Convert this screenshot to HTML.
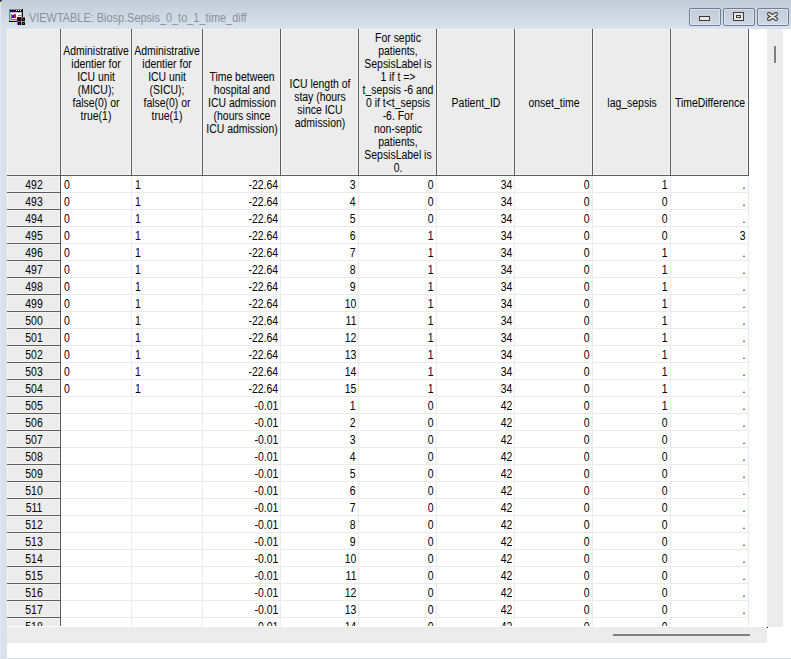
<!DOCTYPE html><html><head><meta charset="utf-8"><style>
html,body{margin:0;padding:0;}
body{width:791px;height:659px;overflow:hidden;position:relative;background:#fff;font-family:"Liberation Sans", sans-serif;}
div{position:absolute;}
.t{white-space:nowrap;font-size:12px;line-height:16px;color:#000;}
.hl{font-size:12px;line-height:13px;white-space:nowrap;color:#000;}
</style></head><body><div style="left:0px;top:0px;width:791px;height:29px;background:linear-gradient(#c2cdd9,#d9e2ed);"></div><div style="left:0px;top:29px;width:7px;height:630px;background:#d9e1ed;"></div><div style="left:0px;top:0px;width:1px;height:659px;background:#e3e6ec;"></div><div style="left:0px;top:658px;width:791px;height:1px;background:#d9e1ed;"></div><div style="left:0;top:0;width:3px;height:3px;background:linear-gradient(135deg,#444 0,#444 50%,transparent 50%)"></div><svg width="16" height="16" viewBox="0 0 16 16" shape-rendering="crispEdges" style="position:absolute;left:9px;top:9px">
<rect x="0" y="0" width="14" height="13" fill="#808080"/>
<rect x="13" y="0" width="1" height="13" fill="#000"/>
<rect x="0" y="12" width="14" height="1" fill="#000"/>
<rect x="1" y="1" width="12" height="2" fill="#000"/>
<rect x="1" y="1" width="5" height="2" fill="#000080"/>
<rect x="7" y="1" width="1" height="1" fill="#fff"/><rect x="9" y="1" width="1" height="1" fill="#fff"/><rect x="11" y="1" width="1" height="1" fill="#fff"/>
<rect x="1" y="3" width="12" height="9" fill="#c0c0c0"/>
<rect x="2" y="4" width="10" height="7" fill="#fff"/>
<rect x="2" y="5" width="1" height="6" fill="#808080"/>
<rect x="2" y="10" width="8" height="1" fill="#808080"/>
<rect x="3" y="6" width="2" height="3" fill="#0000ff"/>
<rect x="5" y="5" width="2" height="4" fill="#ff0000"/>
<rect x="9" y="6" width="3" height="1" fill="#808080"/>
<rect x="8" y="8" width="8" height="8" fill="#000"/>
<rect x="8" y="8" width="4" height="1" fill="#0000ff"/><rect x="8" y="8" width="1" height="4" fill="#0000ff"/>
<rect x="12" y="8" width="4" height="1" fill="#ff2000"/><rect x="12" y="8" width="1" height="4" fill="#ff2000"/>
<rect x="8" y="12" width="4" height="1" fill="#ff00ff"/><rect x="8" y="12" width="1" height="4" fill="#ff00ff"/>
<rect x="12" y="12" width="4" height="1" fill="#00ff00"/><rect x="12" y="12" width="1" height="4" fill="#00ff00"/>
<rect x="10" y="10" width="1" height="1" fill="#000080"/><rect x="14" y="10" width="1" height="1" fill="#800000"/>
<rect x="10" y="14" width="1" height="1" fill="#800080"/><rect x="14" y="14" width="1" height="1" fill="#008000"/>
</svg><div class="t" style="left:29px;top:10px;font-size:13px;line-height:16px;color:#8a909a;transform:scaleX(0.84);transform-origin:0 0">VIEWTABLE: Biosp.Sepsis_0_to_1_time_diff</div><div style="left:689px;top:8px;width:30px;height:16px;border:1px solid #737a92;border-radius:2px;background:linear-gradient(#c2ccd9,#cfd8e4);box-shadow:inset 0 0 0 1px #dde4ee"></div><svg style="position:absolute;left:699px;top:16px" width="11" height="5" shape-rendering="crispEdges"><rect x="0" y="0" width="11" height="5" rx="1" fill="#3c3c3c"/><rect x="1" y="1" width="9" height="3" fill="#ebe8e0"/></svg><div style="left:723px;top:8px;width:30px;height:16px;border:1px solid #737a92;border-radius:2px;background:linear-gradient(#c2ccd9,#cfd8e4);box-shadow:inset 0 0 0 1px #dde4ee"></div><svg style="position:absolute;left:733px;top:12px" width="11" height="9" shape-rendering="crispEdges"><rect x="0" y="0" width="11" height="9" rx="1" fill="#3c3c3c"/><rect x="1" y="1" width="9" height="7" fill="#ebe8e0"/><rect x="3" y="3" width="5" height="3" fill="#3c3c3c"/><rect x="4" y="4" width="3" height="1" fill="#ebe8e0"/></svg><div style="left:757px;top:8px;width:30px;height:16px;border:1px solid #737a92;border-radius:2px;background:linear-gradient(#c2ccd9,#cfd8e4);box-shadow:inset 0 0 0 1px #dde4ee"></div><svg style="position:absolute;left:766px;top:11px" width="13" height="11" viewBox="0 0 13 11"><path d="M3 3 L10 8 M10 3 L3 8" stroke="#3c3c3c" stroke-width="4" stroke-linecap="round"/><path d="M3 3 L10 8 M10 3 L3 8" stroke="#ebe8e0" stroke-width="2" stroke-linecap="round"/></svg><div style="left:7px;top:29px;width:742px;height:147px;background:#ececec;"></div><div style="left:7px;top:29px;width:741px;height:1px;background:#f4f4f4;"></div><div style="left:7px;top:29px;width:1px;height:146px;background:#f4f4f4;"></div><div style="left:7px;top:174px;width:741px;height:1px;background:#f4f4f4;"></div><div style="left:7px;top:175px;width:742px;height:1px;background:#5c5c5c;"></div><div style="left:59px;top:30px;width:1px;height:144px;background:#f4f4f4;"></div><div style="left:61px;top:30px;width:1px;height:144px;background:#f4f4f4;"></div><div style="left:60px;top:29px;width:1px;height:147px;background:#5c5c5c;"></div><div style="left:130px;top:30px;width:1px;height:144px;background:#f4f4f4;"></div><div style="left:132px;top:30px;width:1px;height:144px;background:#f4f4f4;"></div><div style="left:131px;top:29px;width:1px;height:147px;background:#5c5c5c;"></div><div style="left:201px;top:30px;width:1px;height:144px;background:#f4f4f4;"></div><div style="left:203px;top:30px;width:1px;height:144px;background:#f4f4f4;"></div><div style="left:202px;top:29px;width:1px;height:147px;background:#5c5c5c;"></div><div style="left:279px;top:30px;width:1px;height:144px;background:#f4f4f4;"></div><div style="left:281px;top:30px;width:1px;height:144px;background:#f4f4f4;"></div><div style="left:280px;top:29px;width:1px;height:147px;background:#5c5c5c;"></div><div style="left:357px;top:30px;width:1px;height:144px;background:#f4f4f4;"></div><div style="left:359px;top:30px;width:1px;height:144px;background:#f4f4f4;"></div><div style="left:358px;top:29px;width:1px;height:147px;background:#5c5c5c;"></div><div style="left:435px;top:30px;width:1px;height:144px;background:#f4f4f4;"></div><div style="left:437px;top:30px;width:1px;height:144px;background:#f4f4f4;"></div><div style="left:436px;top:29px;width:1px;height:147px;background:#5c5c5c;"></div><div style="left:513px;top:30px;width:1px;height:144px;background:#f4f4f4;"></div><div style="left:515px;top:30px;width:1px;height:144px;background:#f4f4f4;"></div><div style="left:514px;top:29px;width:1px;height:147px;background:#5c5c5c;"></div><div style="left:591px;top:30px;width:1px;height:144px;background:#f4f4f4;"></div><div style="left:593px;top:30px;width:1px;height:144px;background:#f4f4f4;"></div><div style="left:592px;top:29px;width:1px;height:147px;background:#5c5c5c;"></div><div style="left:669px;top:30px;width:1px;height:144px;background:#f4f4f4;"></div><div style="left:671px;top:30px;width:1px;height:144px;background:#f4f4f4;"></div><div style="left:670px;top:29px;width:1px;height:147px;background:#5c5c5c;"></div><div style="left:747px;top:30px;width:1px;height:144px;background:#f4f4f4;"></div><div style="left:748px;top:29px;width:1px;height:147px;background:#5c5c5c;"></div><div style="left:61px;top:176px;width:688px;height:450px;background:#fff;"></div><div style="left:7px;top:176px;width:53px;height:450px;background:#ececec;"></div><div style="left:60px;top:176px;width:1px;height:450px;background:#5c5c5c;"></div><div style="left:7px;top:176px;width:1px;height:450px;background:#f4f4f4;"></div><div style="left:59px;top:176px;width:1px;height:450px;background:#f4f4f4;"></div><div style="left:7px;top:176px;width:52px;height:1px;background:#f4f4f4;"></div><div style="left:7px;top:192px;width:53px;height:1px;background:#5c5c5c;"></div><div style="left:7px;top:191px;width:52px;height:1px;background:#f4f4f4;"></div><div style="left:7px;top:193px;width:52px;height:1px;background:#f4f4f4;"></div><div style="left:62px;top:192px;width:687px;height:1px;background:#ebebeb;"></div><div style="left:7px;top:209px;width:53px;height:1px;background:#5c5c5c;"></div><div style="left:7px;top:208px;width:52px;height:1px;background:#f4f4f4;"></div><div style="left:7px;top:210px;width:52px;height:1px;background:#f4f4f4;"></div><div style="left:62px;top:209px;width:687px;height:1px;background:#ebebeb;"></div><div style="left:7px;top:226px;width:53px;height:1px;background:#5c5c5c;"></div><div style="left:7px;top:225px;width:52px;height:1px;background:#f4f4f4;"></div><div style="left:7px;top:227px;width:52px;height:1px;background:#f4f4f4;"></div><div style="left:62px;top:226px;width:687px;height:1px;background:#ebebeb;"></div><div style="left:7px;top:243px;width:53px;height:1px;background:#5c5c5c;"></div><div style="left:7px;top:242px;width:52px;height:1px;background:#f4f4f4;"></div><div style="left:7px;top:244px;width:52px;height:1px;background:#f4f4f4;"></div><div style="left:62px;top:243px;width:687px;height:1px;background:#ebebeb;"></div><div style="left:7px;top:260px;width:53px;height:1px;background:#5c5c5c;"></div><div style="left:7px;top:259px;width:52px;height:1px;background:#f4f4f4;"></div><div style="left:7px;top:261px;width:52px;height:1px;background:#f4f4f4;"></div><div style="left:62px;top:260px;width:687px;height:1px;background:#ebebeb;"></div><div style="left:7px;top:277px;width:53px;height:1px;background:#5c5c5c;"></div><div style="left:7px;top:276px;width:52px;height:1px;background:#f4f4f4;"></div><div style="left:7px;top:278px;width:52px;height:1px;background:#f4f4f4;"></div><div style="left:62px;top:277px;width:687px;height:1px;background:#ebebeb;"></div><div style="left:7px;top:294px;width:53px;height:1px;background:#5c5c5c;"></div><div style="left:7px;top:293px;width:52px;height:1px;background:#f4f4f4;"></div><div style="left:7px;top:295px;width:52px;height:1px;background:#f4f4f4;"></div><div style="left:62px;top:294px;width:687px;height:1px;background:#ebebeb;"></div><div style="left:7px;top:311px;width:53px;height:1px;background:#5c5c5c;"></div><div style="left:7px;top:310px;width:52px;height:1px;background:#f4f4f4;"></div><div style="left:7px;top:312px;width:52px;height:1px;background:#f4f4f4;"></div><div style="left:62px;top:311px;width:687px;height:1px;background:#ebebeb;"></div><div style="left:7px;top:328px;width:53px;height:1px;background:#5c5c5c;"></div><div style="left:7px;top:327px;width:52px;height:1px;background:#f4f4f4;"></div><div style="left:7px;top:329px;width:52px;height:1px;background:#f4f4f4;"></div><div style="left:62px;top:328px;width:687px;height:1px;background:#ebebeb;"></div><div style="left:7px;top:345px;width:53px;height:1px;background:#5c5c5c;"></div><div style="left:7px;top:344px;width:52px;height:1px;background:#f4f4f4;"></div><div style="left:7px;top:346px;width:52px;height:1px;background:#f4f4f4;"></div><div style="left:62px;top:345px;width:687px;height:1px;background:#ebebeb;"></div><div style="left:7px;top:362px;width:53px;height:1px;background:#5c5c5c;"></div><div style="left:7px;top:361px;width:52px;height:1px;background:#f4f4f4;"></div><div style="left:7px;top:363px;width:52px;height:1px;background:#f4f4f4;"></div><div style="left:62px;top:362px;width:687px;height:1px;background:#ebebeb;"></div><div style="left:7px;top:379px;width:53px;height:1px;background:#5c5c5c;"></div><div style="left:7px;top:378px;width:52px;height:1px;background:#f4f4f4;"></div><div style="left:7px;top:380px;width:52px;height:1px;background:#f4f4f4;"></div><div style="left:62px;top:379px;width:687px;height:1px;background:#ebebeb;"></div><div style="left:7px;top:396px;width:53px;height:1px;background:#5c5c5c;"></div><div style="left:7px;top:395px;width:52px;height:1px;background:#f4f4f4;"></div><div style="left:7px;top:397px;width:52px;height:1px;background:#f4f4f4;"></div><div style="left:62px;top:396px;width:687px;height:1px;background:#ebebeb;"></div><div style="left:7px;top:413px;width:53px;height:1px;background:#5c5c5c;"></div><div style="left:7px;top:412px;width:52px;height:1px;background:#f4f4f4;"></div><div style="left:7px;top:414px;width:52px;height:1px;background:#f4f4f4;"></div><div style="left:62px;top:413px;width:687px;height:1px;background:#ebebeb;"></div><div style="left:7px;top:430px;width:53px;height:1px;background:#5c5c5c;"></div><div style="left:7px;top:429px;width:52px;height:1px;background:#f4f4f4;"></div><div style="left:7px;top:431px;width:52px;height:1px;background:#f4f4f4;"></div><div style="left:62px;top:430px;width:687px;height:1px;background:#ebebeb;"></div><div style="left:7px;top:447px;width:53px;height:1px;background:#5c5c5c;"></div><div style="left:7px;top:446px;width:52px;height:1px;background:#f4f4f4;"></div><div style="left:7px;top:448px;width:52px;height:1px;background:#f4f4f4;"></div><div style="left:62px;top:447px;width:687px;height:1px;background:#ebebeb;"></div><div style="left:7px;top:464px;width:53px;height:1px;background:#5c5c5c;"></div><div style="left:7px;top:463px;width:52px;height:1px;background:#f4f4f4;"></div><div style="left:7px;top:465px;width:52px;height:1px;background:#f4f4f4;"></div><div style="left:62px;top:464px;width:687px;height:1px;background:#ebebeb;"></div><div style="left:7px;top:481px;width:53px;height:1px;background:#5c5c5c;"></div><div style="left:7px;top:480px;width:52px;height:1px;background:#f4f4f4;"></div><div style="left:7px;top:482px;width:52px;height:1px;background:#f4f4f4;"></div><div style="left:62px;top:481px;width:687px;height:1px;background:#ebebeb;"></div><div style="left:7px;top:498px;width:53px;height:1px;background:#5c5c5c;"></div><div style="left:7px;top:497px;width:52px;height:1px;background:#f4f4f4;"></div><div style="left:7px;top:499px;width:52px;height:1px;background:#f4f4f4;"></div><div style="left:62px;top:498px;width:687px;height:1px;background:#ebebeb;"></div><div style="left:7px;top:515px;width:53px;height:1px;background:#5c5c5c;"></div><div style="left:7px;top:514px;width:52px;height:1px;background:#f4f4f4;"></div><div style="left:7px;top:516px;width:52px;height:1px;background:#f4f4f4;"></div><div style="left:62px;top:515px;width:687px;height:1px;background:#ebebeb;"></div><div style="left:7px;top:532px;width:53px;height:1px;background:#5c5c5c;"></div><div style="left:7px;top:531px;width:52px;height:1px;background:#f4f4f4;"></div><div style="left:7px;top:533px;width:52px;height:1px;background:#f4f4f4;"></div><div style="left:62px;top:532px;width:687px;height:1px;background:#ebebeb;"></div><div style="left:7px;top:549px;width:53px;height:1px;background:#5c5c5c;"></div><div style="left:7px;top:548px;width:52px;height:1px;background:#f4f4f4;"></div><div style="left:7px;top:550px;width:52px;height:1px;background:#f4f4f4;"></div><div style="left:62px;top:549px;width:687px;height:1px;background:#ebebeb;"></div><div style="left:7px;top:566px;width:53px;height:1px;background:#5c5c5c;"></div><div style="left:7px;top:565px;width:52px;height:1px;background:#f4f4f4;"></div><div style="left:7px;top:567px;width:52px;height:1px;background:#f4f4f4;"></div><div style="left:62px;top:566px;width:687px;height:1px;background:#ebebeb;"></div><div style="left:7px;top:583px;width:53px;height:1px;background:#5c5c5c;"></div><div style="left:7px;top:582px;width:52px;height:1px;background:#f4f4f4;"></div><div style="left:7px;top:584px;width:52px;height:1px;background:#f4f4f4;"></div><div style="left:62px;top:583px;width:687px;height:1px;background:#ebebeb;"></div><div style="left:7px;top:600px;width:53px;height:1px;background:#5c5c5c;"></div><div style="left:7px;top:599px;width:52px;height:1px;background:#f4f4f4;"></div><div style="left:7px;top:601px;width:52px;height:1px;background:#f4f4f4;"></div><div style="left:62px;top:600px;width:687px;height:1px;background:#ebebeb;"></div><div style="left:7px;top:617px;width:53px;height:1px;background:#5c5c5c;"></div><div style="left:7px;top:616px;width:52px;height:1px;background:#f4f4f4;"></div><div style="left:7px;top:618px;width:52px;height:1px;background:#f4f4f4;"></div><div style="left:62px;top:617px;width:687px;height:1px;background:#ebebeb;"></div><div style="left:131px;top:177px;width:1px;height:449px;background:#ebebeb;"></div><div style="left:202px;top:177px;width:1px;height:449px;background:#ebebeb;"></div><div style="left:280px;top:177px;width:1px;height:449px;background:#ebebeb;"></div><div style="left:358px;top:177px;width:1px;height:449px;background:#ebebeb;"></div><div style="left:436px;top:177px;width:1px;height:449px;background:#ebebeb;"></div><div style="left:514px;top:177px;width:1px;height:449px;background:#ebebeb;"></div><div style="left:592px;top:177px;width:1px;height:449px;background:#ebebeb;"></div><div style="left:670px;top:177px;width:1px;height:449px;background:#ebebeb;"></div><div style="left:748px;top:177px;width:1px;height:449px;background:#ebebeb;"></div><div style="left:0;top:0;width:791px;height:626px;overflow:hidden"><div class="t" style="left:33.5px;top:177px;transform:translateX(-50%) scaleX(0.87)">492</div><div class="t" style="left:64px;top:177px;transform:scaleX(0.87);transform-origin:0 0">0</div><div class="t" style="left:135px;top:177px;transform:scaleX(0.87);transform-origin:0 0">1</div><div class="t" style="right:513px;top:177px;transform:scaleX(0.87);transform-origin:100% 0">-22.64</div><div class="t" style="right:435px;top:177px;transform:scaleX(0.87);transform-origin:100% 0">3</div><div class="t" style="right:357px;top:177px;transform:scaleX(0.87);transform-origin:100% 0">0</div><div class="t" style="right:279px;top:177px;transform:scaleX(0.87);transform-origin:100% 0">34</div><div class="t" style="right:201px;top:177px;transform:scaleX(0.87);transform-origin:100% 0">0</div><div class="t" style="right:123px;top:177px;transform:scaleX(0.87);transform-origin:100% 0">1</div><div class="t" style="right:46px;top:177px;transform:scaleX(0.87);transform-origin:100% 0">.</div><div class="t" style="left:33.5px;top:194px;transform:translateX(-50%) scaleX(0.87)">493</div><div class="t" style="left:64px;top:194px;transform:scaleX(0.87);transform-origin:0 0">0</div><div class="t" style="left:135px;top:194px;transform:scaleX(0.87);transform-origin:0 0">1</div><div class="t" style="right:513px;top:194px;transform:scaleX(0.87);transform-origin:100% 0">-22.64</div><div class="t" style="right:435px;top:194px;transform:scaleX(0.87);transform-origin:100% 0">4</div><div class="t" style="right:357px;top:194px;transform:scaleX(0.87);transform-origin:100% 0">0</div><div class="t" style="right:279px;top:194px;transform:scaleX(0.87);transform-origin:100% 0">34</div><div class="t" style="right:201px;top:194px;transform:scaleX(0.87);transform-origin:100% 0">0</div><div class="t" style="right:123px;top:194px;transform:scaleX(0.87);transform-origin:100% 0">0</div><div class="t" style="right:46px;top:194px;transform:scaleX(0.87);transform-origin:100% 0">.</div><div class="t" style="left:33.5px;top:211px;transform:translateX(-50%) scaleX(0.87)">494</div><div class="t" style="left:64px;top:211px;transform:scaleX(0.87);transform-origin:0 0">0</div><div class="t" style="left:135px;top:211px;transform:scaleX(0.87);transform-origin:0 0">1</div><div class="t" style="right:513px;top:211px;transform:scaleX(0.87);transform-origin:100% 0">-22.64</div><div class="t" style="right:435px;top:211px;transform:scaleX(0.87);transform-origin:100% 0">5</div><div class="t" style="right:357px;top:211px;transform:scaleX(0.87);transform-origin:100% 0">0</div><div class="t" style="right:279px;top:211px;transform:scaleX(0.87);transform-origin:100% 0">34</div><div class="t" style="right:201px;top:211px;transform:scaleX(0.87);transform-origin:100% 0">0</div><div class="t" style="right:123px;top:211px;transform:scaleX(0.87);transform-origin:100% 0">0</div><div class="t" style="right:46px;top:211px;transform:scaleX(0.87);transform-origin:100% 0">.</div><div class="t" style="left:33.5px;top:228px;transform:translateX(-50%) scaleX(0.87)">495</div><div class="t" style="left:64px;top:228px;transform:scaleX(0.87);transform-origin:0 0">0</div><div class="t" style="left:135px;top:228px;transform:scaleX(0.87);transform-origin:0 0">1</div><div class="t" style="right:513px;top:228px;transform:scaleX(0.87);transform-origin:100% 0">-22.64</div><div class="t" style="right:435px;top:228px;transform:scaleX(0.87);transform-origin:100% 0">6</div><div class="t" style="right:357px;top:228px;transform:scaleX(0.87);transform-origin:100% 0">1</div><div class="t" style="right:279px;top:228px;transform:scaleX(0.87);transform-origin:100% 0">34</div><div class="t" style="right:201px;top:228px;transform:scaleX(0.87);transform-origin:100% 0">0</div><div class="t" style="right:123px;top:228px;transform:scaleX(0.87);transform-origin:100% 0">0</div><div class="t" style="right:45px;top:228px;transform:scaleX(0.87);transform-origin:100% 0">3</div><div class="t" style="left:33.5px;top:245px;transform:translateX(-50%) scaleX(0.87)">496</div><div class="t" style="left:64px;top:245px;transform:scaleX(0.87);transform-origin:0 0">0</div><div class="t" style="left:135px;top:245px;transform:scaleX(0.87);transform-origin:0 0">1</div><div class="t" style="right:513px;top:245px;transform:scaleX(0.87);transform-origin:100% 0">-22.64</div><div class="t" style="right:435px;top:245px;transform:scaleX(0.87);transform-origin:100% 0">7</div><div class="t" style="right:357px;top:245px;transform:scaleX(0.87);transform-origin:100% 0">1</div><div class="t" style="right:279px;top:245px;transform:scaleX(0.87);transform-origin:100% 0">34</div><div class="t" style="right:201px;top:245px;transform:scaleX(0.87);transform-origin:100% 0">0</div><div class="t" style="right:123px;top:245px;transform:scaleX(0.87);transform-origin:100% 0">1</div><div class="t" style="right:46px;top:245px;transform:scaleX(0.87);transform-origin:100% 0">.</div><div class="t" style="left:33.5px;top:262px;transform:translateX(-50%) scaleX(0.87)">497</div><div class="t" style="left:64px;top:262px;transform:scaleX(0.87);transform-origin:0 0">0</div><div class="t" style="left:135px;top:262px;transform:scaleX(0.87);transform-origin:0 0">1</div><div class="t" style="right:513px;top:262px;transform:scaleX(0.87);transform-origin:100% 0">-22.64</div><div class="t" style="right:435px;top:262px;transform:scaleX(0.87);transform-origin:100% 0">8</div><div class="t" style="right:357px;top:262px;transform:scaleX(0.87);transform-origin:100% 0">1</div><div class="t" style="right:279px;top:262px;transform:scaleX(0.87);transform-origin:100% 0">34</div><div class="t" style="right:201px;top:262px;transform:scaleX(0.87);transform-origin:100% 0">0</div><div class="t" style="right:123px;top:262px;transform:scaleX(0.87);transform-origin:100% 0">1</div><div class="t" style="right:46px;top:262px;transform:scaleX(0.87);transform-origin:100% 0">.</div><div class="t" style="left:33.5px;top:279px;transform:translateX(-50%) scaleX(0.87)">498</div><div class="t" style="left:64px;top:279px;transform:scaleX(0.87);transform-origin:0 0">0</div><div class="t" style="left:135px;top:279px;transform:scaleX(0.87);transform-origin:0 0">1</div><div class="t" style="right:513px;top:279px;transform:scaleX(0.87);transform-origin:100% 0">-22.64</div><div class="t" style="right:435px;top:279px;transform:scaleX(0.87);transform-origin:100% 0">9</div><div class="t" style="right:357px;top:279px;transform:scaleX(0.87);transform-origin:100% 0">1</div><div class="t" style="right:279px;top:279px;transform:scaleX(0.87);transform-origin:100% 0">34</div><div class="t" style="right:201px;top:279px;transform:scaleX(0.87);transform-origin:100% 0">0</div><div class="t" style="right:123px;top:279px;transform:scaleX(0.87);transform-origin:100% 0">1</div><div class="t" style="right:46px;top:279px;transform:scaleX(0.87);transform-origin:100% 0">.</div><div class="t" style="left:33.5px;top:296px;transform:translateX(-50%) scaleX(0.87)">499</div><div class="t" style="left:64px;top:296px;transform:scaleX(0.87);transform-origin:0 0">0</div><div class="t" style="left:135px;top:296px;transform:scaleX(0.87);transform-origin:0 0">1</div><div class="t" style="right:513px;top:296px;transform:scaleX(0.87);transform-origin:100% 0">-22.64</div><div class="t" style="right:435px;top:296px;transform:scaleX(0.87);transform-origin:100% 0">10</div><div class="t" style="right:357px;top:296px;transform:scaleX(0.87);transform-origin:100% 0">1</div><div class="t" style="right:279px;top:296px;transform:scaleX(0.87);transform-origin:100% 0">34</div><div class="t" style="right:201px;top:296px;transform:scaleX(0.87);transform-origin:100% 0">0</div><div class="t" style="right:123px;top:296px;transform:scaleX(0.87);transform-origin:100% 0">1</div><div class="t" style="right:46px;top:296px;transform:scaleX(0.87);transform-origin:100% 0">.</div><div class="t" style="left:33.5px;top:313px;transform:translateX(-50%) scaleX(0.87)">500</div><div class="t" style="left:64px;top:313px;transform:scaleX(0.87);transform-origin:0 0">0</div><div class="t" style="left:135px;top:313px;transform:scaleX(0.87);transform-origin:0 0">1</div><div class="t" style="right:513px;top:313px;transform:scaleX(0.87);transform-origin:100% 0">-22.64</div><div class="t" style="right:435px;top:313px;transform:scaleX(0.87);transform-origin:100% 0">11</div><div class="t" style="right:357px;top:313px;transform:scaleX(0.87);transform-origin:100% 0">1</div><div class="t" style="right:279px;top:313px;transform:scaleX(0.87);transform-origin:100% 0">34</div><div class="t" style="right:201px;top:313px;transform:scaleX(0.87);transform-origin:100% 0">0</div><div class="t" style="right:123px;top:313px;transform:scaleX(0.87);transform-origin:100% 0">1</div><div class="t" style="right:46px;top:313px;transform:scaleX(0.87);transform-origin:100% 0">.</div><div class="t" style="left:33.5px;top:330px;transform:translateX(-50%) scaleX(0.87)">501</div><div class="t" style="left:64px;top:330px;transform:scaleX(0.87);transform-origin:0 0">0</div><div class="t" style="left:135px;top:330px;transform:scaleX(0.87);transform-origin:0 0">1</div><div class="t" style="right:513px;top:330px;transform:scaleX(0.87);transform-origin:100% 0">-22.64</div><div class="t" style="right:435px;top:330px;transform:scaleX(0.87);transform-origin:100% 0">12</div><div class="t" style="right:357px;top:330px;transform:scaleX(0.87);transform-origin:100% 0">1</div><div class="t" style="right:279px;top:330px;transform:scaleX(0.87);transform-origin:100% 0">34</div><div class="t" style="right:201px;top:330px;transform:scaleX(0.87);transform-origin:100% 0">0</div><div class="t" style="right:123px;top:330px;transform:scaleX(0.87);transform-origin:100% 0">1</div><div class="t" style="right:46px;top:330px;transform:scaleX(0.87);transform-origin:100% 0">.</div><div class="t" style="left:33.5px;top:347px;transform:translateX(-50%) scaleX(0.87)">502</div><div class="t" style="left:64px;top:347px;transform:scaleX(0.87);transform-origin:0 0">0</div><div class="t" style="left:135px;top:347px;transform:scaleX(0.87);transform-origin:0 0">1</div><div class="t" style="right:513px;top:347px;transform:scaleX(0.87);transform-origin:100% 0">-22.64</div><div class="t" style="right:435px;top:347px;transform:scaleX(0.87);transform-origin:100% 0">13</div><div class="t" style="right:357px;top:347px;transform:scaleX(0.87);transform-origin:100% 0">1</div><div class="t" style="right:279px;top:347px;transform:scaleX(0.87);transform-origin:100% 0">34</div><div class="t" style="right:201px;top:347px;transform:scaleX(0.87);transform-origin:100% 0">0</div><div class="t" style="right:123px;top:347px;transform:scaleX(0.87);transform-origin:100% 0">1</div><div class="t" style="right:46px;top:347px;transform:scaleX(0.87);transform-origin:100% 0">.</div><div class="t" style="left:33.5px;top:364px;transform:translateX(-50%) scaleX(0.87)">503</div><div class="t" style="left:64px;top:364px;transform:scaleX(0.87);transform-origin:0 0">0</div><div class="t" style="left:135px;top:364px;transform:scaleX(0.87);transform-origin:0 0">1</div><div class="t" style="right:513px;top:364px;transform:scaleX(0.87);transform-origin:100% 0">-22.64</div><div class="t" style="right:435px;top:364px;transform:scaleX(0.87);transform-origin:100% 0">14</div><div class="t" style="right:357px;top:364px;transform:scaleX(0.87);transform-origin:100% 0">1</div><div class="t" style="right:279px;top:364px;transform:scaleX(0.87);transform-origin:100% 0">34</div><div class="t" style="right:201px;top:364px;transform:scaleX(0.87);transform-origin:100% 0">0</div><div class="t" style="right:123px;top:364px;transform:scaleX(0.87);transform-origin:100% 0">1</div><div class="t" style="right:46px;top:364px;transform:scaleX(0.87);transform-origin:100% 0">.</div><div class="t" style="left:33.5px;top:381px;transform:translateX(-50%) scaleX(0.87)">504</div><div class="t" style="left:64px;top:381px;transform:scaleX(0.87);transform-origin:0 0">0</div><div class="t" style="left:135px;top:381px;transform:scaleX(0.87);transform-origin:0 0">1</div><div class="t" style="right:513px;top:381px;transform:scaleX(0.87);transform-origin:100% 0">-22.64</div><div class="t" style="right:435px;top:381px;transform:scaleX(0.87);transform-origin:100% 0">15</div><div class="t" style="right:357px;top:381px;transform:scaleX(0.87);transform-origin:100% 0">1</div><div class="t" style="right:279px;top:381px;transform:scaleX(0.87);transform-origin:100% 0">34</div><div class="t" style="right:201px;top:381px;transform:scaleX(0.87);transform-origin:100% 0">0</div><div class="t" style="right:123px;top:381px;transform:scaleX(0.87);transform-origin:100% 0">1</div><div class="t" style="right:46px;top:381px;transform:scaleX(0.87);transform-origin:100% 0">.</div><div class="t" style="left:33.5px;top:398px;transform:translateX(-50%) scaleX(0.87)">505</div><div class="t" style="right:513px;top:398px;transform:scaleX(0.87);transform-origin:100% 0">-0.01</div><div class="t" style="right:435px;top:398px;transform:scaleX(0.87);transform-origin:100% 0">1</div><div class="t" style="right:357px;top:398px;transform:scaleX(0.87);transform-origin:100% 0">0</div><div class="t" style="right:279px;top:398px;transform:scaleX(0.87);transform-origin:100% 0">42</div><div class="t" style="right:201px;top:398px;transform:scaleX(0.87);transform-origin:100% 0">0</div><div class="t" style="right:123px;top:398px;transform:scaleX(0.87);transform-origin:100% 0">1</div><div class="t" style="right:46px;top:398px;transform:scaleX(0.87);transform-origin:100% 0">.</div><div class="t" style="left:33.5px;top:415px;transform:translateX(-50%) scaleX(0.87)">506</div><div class="t" style="right:513px;top:415px;transform:scaleX(0.87);transform-origin:100% 0">-0.01</div><div class="t" style="right:435px;top:415px;transform:scaleX(0.87);transform-origin:100% 0">2</div><div class="t" style="right:357px;top:415px;transform:scaleX(0.87);transform-origin:100% 0">0</div><div class="t" style="right:279px;top:415px;transform:scaleX(0.87);transform-origin:100% 0">42</div><div class="t" style="right:201px;top:415px;transform:scaleX(0.87);transform-origin:100% 0">0</div><div class="t" style="right:123px;top:415px;transform:scaleX(0.87);transform-origin:100% 0">0</div><div class="t" style="right:46px;top:415px;transform:scaleX(0.87);transform-origin:100% 0">.</div><div class="t" style="left:33.5px;top:432px;transform:translateX(-50%) scaleX(0.87)">507</div><div class="t" style="right:513px;top:432px;transform:scaleX(0.87);transform-origin:100% 0">-0.01</div><div class="t" style="right:435px;top:432px;transform:scaleX(0.87);transform-origin:100% 0">3</div><div class="t" style="right:357px;top:432px;transform:scaleX(0.87);transform-origin:100% 0">0</div><div class="t" style="right:279px;top:432px;transform:scaleX(0.87);transform-origin:100% 0">42</div><div class="t" style="right:201px;top:432px;transform:scaleX(0.87);transform-origin:100% 0">0</div><div class="t" style="right:123px;top:432px;transform:scaleX(0.87);transform-origin:100% 0">0</div><div class="t" style="right:46px;top:432px;transform:scaleX(0.87);transform-origin:100% 0">.</div><div class="t" style="left:33.5px;top:449px;transform:translateX(-50%) scaleX(0.87)">508</div><div class="t" style="right:513px;top:449px;transform:scaleX(0.87);transform-origin:100% 0">-0.01</div><div class="t" style="right:435px;top:449px;transform:scaleX(0.87);transform-origin:100% 0">4</div><div class="t" style="right:357px;top:449px;transform:scaleX(0.87);transform-origin:100% 0">0</div><div class="t" style="right:279px;top:449px;transform:scaleX(0.87);transform-origin:100% 0">42</div><div class="t" style="right:201px;top:449px;transform:scaleX(0.87);transform-origin:100% 0">0</div><div class="t" style="right:123px;top:449px;transform:scaleX(0.87);transform-origin:100% 0">0</div><div class="t" style="right:46px;top:449px;transform:scaleX(0.87);transform-origin:100% 0">.</div><div class="t" style="left:33.5px;top:466px;transform:translateX(-50%) scaleX(0.87)">509</div><div class="t" style="right:513px;top:466px;transform:scaleX(0.87);transform-origin:100% 0">-0.01</div><div class="t" style="right:435px;top:466px;transform:scaleX(0.87);transform-origin:100% 0">5</div><div class="t" style="right:357px;top:466px;transform:scaleX(0.87);transform-origin:100% 0">0</div><div class="t" style="right:279px;top:466px;transform:scaleX(0.87);transform-origin:100% 0">42</div><div class="t" style="right:201px;top:466px;transform:scaleX(0.87);transform-origin:100% 0">0</div><div class="t" style="right:123px;top:466px;transform:scaleX(0.87);transform-origin:100% 0">0</div><div class="t" style="right:46px;top:466px;transform:scaleX(0.87);transform-origin:100% 0">.</div><div class="t" style="left:33.5px;top:483px;transform:translateX(-50%) scaleX(0.87)">510</div><div class="t" style="right:513px;top:483px;transform:scaleX(0.87);transform-origin:100% 0">-0.01</div><div class="t" style="right:435px;top:483px;transform:scaleX(0.87);transform-origin:100% 0">6</div><div class="t" style="right:357px;top:483px;transform:scaleX(0.87);transform-origin:100% 0">0</div><div class="t" style="right:279px;top:483px;transform:scaleX(0.87);transform-origin:100% 0">42</div><div class="t" style="right:201px;top:483px;transform:scaleX(0.87);transform-origin:100% 0">0</div><div class="t" style="right:123px;top:483px;transform:scaleX(0.87);transform-origin:100% 0">0</div><div class="t" style="right:46px;top:483px;transform:scaleX(0.87);transform-origin:100% 0">.</div><div class="t" style="left:33.5px;top:500px;transform:translateX(-50%) scaleX(0.87)">511</div><div class="t" style="right:513px;top:500px;transform:scaleX(0.87);transform-origin:100% 0">-0.01</div><div class="t" style="right:435px;top:500px;transform:scaleX(0.87);transform-origin:100% 0">7</div><div class="t" style="right:357px;top:500px;transform:scaleX(0.87);transform-origin:100% 0">0</div><div class="t" style="right:279px;top:500px;transform:scaleX(0.87);transform-origin:100% 0">42</div><div class="t" style="right:201px;top:500px;transform:scaleX(0.87);transform-origin:100% 0">0</div><div class="t" style="right:123px;top:500px;transform:scaleX(0.87);transform-origin:100% 0">0</div><div class="t" style="right:46px;top:500px;transform:scaleX(0.87);transform-origin:100% 0">.</div><div class="t" style="left:33.5px;top:517px;transform:translateX(-50%) scaleX(0.87)">512</div><div class="t" style="right:513px;top:517px;transform:scaleX(0.87);transform-origin:100% 0">-0.01</div><div class="t" style="right:435px;top:517px;transform:scaleX(0.87);transform-origin:100% 0">8</div><div class="t" style="right:357px;top:517px;transform:scaleX(0.87);transform-origin:100% 0">0</div><div class="t" style="right:279px;top:517px;transform:scaleX(0.87);transform-origin:100% 0">42</div><div class="t" style="right:201px;top:517px;transform:scaleX(0.87);transform-origin:100% 0">0</div><div class="t" style="right:123px;top:517px;transform:scaleX(0.87);transform-origin:100% 0">0</div><div class="t" style="right:46px;top:517px;transform:scaleX(0.87);transform-origin:100% 0">.</div><div class="t" style="left:33.5px;top:534px;transform:translateX(-50%) scaleX(0.87)">513</div><div class="t" style="right:513px;top:534px;transform:scaleX(0.87);transform-origin:100% 0">-0.01</div><div class="t" style="right:435px;top:534px;transform:scaleX(0.87);transform-origin:100% 0">9</div><div class="t" style="right:357px;top:534px;transform:scaleX(0.87);transform-origin:100% 0">0</div><div class="t" style="right:279px;top:534px;transform:scaleX(0.87);transform-origin:100% 0">42</div><div class="t" style="right:201px;top:534px;transform:scaleX(0.87);transform-origin:100% 0">0</div><div class="t" style="right:123px;top:534px;transform:scaleX(0.87);transform-origin:100% 0">0</div><div class="t" style="right:46px;top:534px;transform:scaleX(0.87);transform-origin:100% 0">.</div><div class="t" style="left:33.5px;top:551px;transform:translateX(-50%) scaleX(0.87)">514</div><div class="t" style="right:513px;top:551px;transform:scaleX(0.87);transform-origin:100% 0">-0.01</div><div class="t" style="right:435px;top:551px;transform:scaleX(0.87);transform-origin:100% 0">10</div><div class="t" style="right:357px;top:551px;transform:scaleX(0.87);transform-origin:100% 0">0</div><div class="t" style="right:279px;top:551px;transform:scaleX(0.87);transform-origin:100% 0">42</div><div class="t" style="right:201px;top:551px;transform:scaleX(0.87);transform-origin:100% 0">0</div><div class="t" style="right:123px;top:551px;transform:scaleX(0.87);transform-origin:100% 0">0</div><div class="t" style="right:46px;top:551px;transform:scaleX(0.87);transform-origin:100% 0">.</div><div class="t" style="left:33.5px;top:568px;transform:translateX(-50%) scaleX(0.87)">515</div><div class="t" style="right:513px;top:568px;transform:scaleX(0.87);transform-origin:100% 0">-0.01</div><div class="t" style="right:435px;top:568px;transform:scaleX(0.87);transform-origin:100% 0">11</div><div class="t" style="right:357px;top:568px;transform:scaleX(0.87);transform-origin:100% 0">0</div><div class="t" style="right:279px;top:568px;transform:scaleX(0.87);transform-origin:100% 0">42</div><div class="t" style="right:201px;top:568px;transform:scaleX(0.87);transform-origin:100% 0">0</div><div class="t" style="right:123px;top:568px;transform:scaleX(0.87);transform-origin:100% 0">0</div><div class="t" style="right:46px;top:568px;transform:scaleX(0.87);transform-origin:100% 0">.</div><div class="t" style="left:33.5px;top:585px;transform:translateX(-50%) scaleX(0.87)">516</div><div class="t" style="right:513px;top:585px;transform:scaleX(0.87);transform-origin:100% 0">-0.01</div><div class="t" style="right:435px;top:585px;transform:scaleX(0.87);transform-origin:100% 0">12</div><div class="t" style="right:357px;top:585px;transform:scaleX(0.87);transform-origin:100% 0">0</div><div class="t" style="right:279px;top:585px;transform:scaleX(0.87);transform-origin:100% 0">42</div><div class="t" style="right:201px;top:585px;transform:scaleX(0.87);transform-origin:100% 0">0</div><div class="t" style="right:123px;top:585px;transform:scaleX(0.87);transform-origin:100% 0">0</div><div class="t" style="right:46px;top:585px;transform:scaleX(0.87);transform-origin:100% 0">.</div><div class="t" style="left:33.5px;top:602px;transform:translateX(-50%) scaleX(0.87)">517</div><div class="t" style="right:513px;top:602px;transform:scaleX(0.87);transform-origin:100% 0">-0.01</div><div class="t" style="right:435px;top:602px;transform:scaleX(0.87);transform-origin:100% 0">13</div><div class="t" style="right:357px;top:602px;transform:scaleX(0.87);transform-origin:100% 0">0</div><div class="t" style="right:279px;top:602px;transform:scaleX(0.87);transform-origin:100% 0">42</div><div class="t" style="right:201px;top:602px;transform:scaleX(0.87);transform-origin:100% 0">0</div><div class="t" style="right:123px;top:602px;transform:scaleX(0.87);transform-origin:100% 0">0</div><div class="t" style="right:46px;top:602px;transform:scaleX(0.87);transform-origin:100% 0">.</div><div class="t" style="left:33.5px;top:619px;transform:translateX(-50%) scaleX(0.87)">518</div><div class="t" style="right:513px;top:619px;transform:scaleX(0.87);transform-origin:100% 0">-0.01</div><div class="t" style="right:435px;top:619px;transform:scaleX(0.87);transform-origin:100% 0">14</div><div class="t" style="right:357px;top:619px;transform:scaleX(0.87);transform-origin:100% 0">0</div><div class="t" style="right:279px;top:619px;transform:scaleX(0.87);transform-origin:100% 0">42</div><div class="t" style="right:201px;top:619px;transform:scaleX(0.87);transform-origin:100% 0">0</div><div class="t" style="right:123px;top:619px;transform:scaleX(0.87);transform-origin:100% 0">0</div><div class="t" style="right:46px;top:619px;transform:scaleX(0.87);transform-origin:100% 0">.</div></div><div class="hl" style="left:96.0px;top:45px;text-align:center;transform:translateX(-50%) scaleX(0.87)">Administrative<br>identier for<br>ICU unit<br>(MICU);<br>false(0) or<br>true(1)</div><div class="hl" style="left:167.0px;top:45px;text-align:center;transform:translateX(-50%) scaleX(0.87)">Administrative<br>identier for<br>ICU unit<br>(SICU);<br>false(0) or<br>true(1)</div><div class="hl" style="left:241.5px;top:71px;text-align:center;transform:translateX(-50%) scaleX(0.87)">Time between<br>hospital and<br>ICU admission<br>(hours since<br>ICU admission)</div><div class="hl" style="left:319.5px;top:78px;text-align:center;transform:translateX(-50%) scaleX(0.87)">ICU length of<br>stay (hours<br>since ICU<br>admission)</div><div class="hl" style="left:397.5px;top:32px;text-align:center;transform:translateX(-50%) scaleX(0.87)">For septic<br>patients,<br>SepsisLabel is<br>1 if t =&gt;<br>t<span style="position:relative;top:-1px">_</span>sepsis -6 and<br>0 if t&lt;t<span style="position:relative;top:-1px">_</span>sepsis<br>-6. For<br>non-septic<br>patients,<br>SepsisLabel is<br>0.</div><div class="hl" style="left:475.5px;top:97px;text-align:center;transform:translateX(-50%) scaleX(0.87)">Patient<span style="position:relative;top:-1px">_</span>ID</div><div class="hl" style="left:553.5px;top:97px;text-align:center;transform:translateX(-50%) scaleX(0.87)">onset<span style="position:relative;top:-1px">_</span>time</div><div class="hl" style="left:631.5px;top:97px;text-align:center;transform:translateX(-50%) scaleX(0.87)">lag<span style="position:relative;top:-1px">_</span>sepsis</div><div class="hl" style="left:709.5px;top:97px;text-align:center;transform:translateX(-50%) scaleX(0.87)">TimeDifference</div><div style="left:767px;top:29px;width:16px;height:598px;background:#ececec;"></div><div style="left:774px;top:46px;width:2px;height:17px;background:#808080;"></div><div style="left:7px;top:627px;width:760px;height:16px;background:#ececec;"></div><div style="left:613px;top:634px;width:137px;height:2px;background:#808080;"></div><div style="left:767px;top:627px;width:1px;height:1px;background:#000;"></div></body></html>
